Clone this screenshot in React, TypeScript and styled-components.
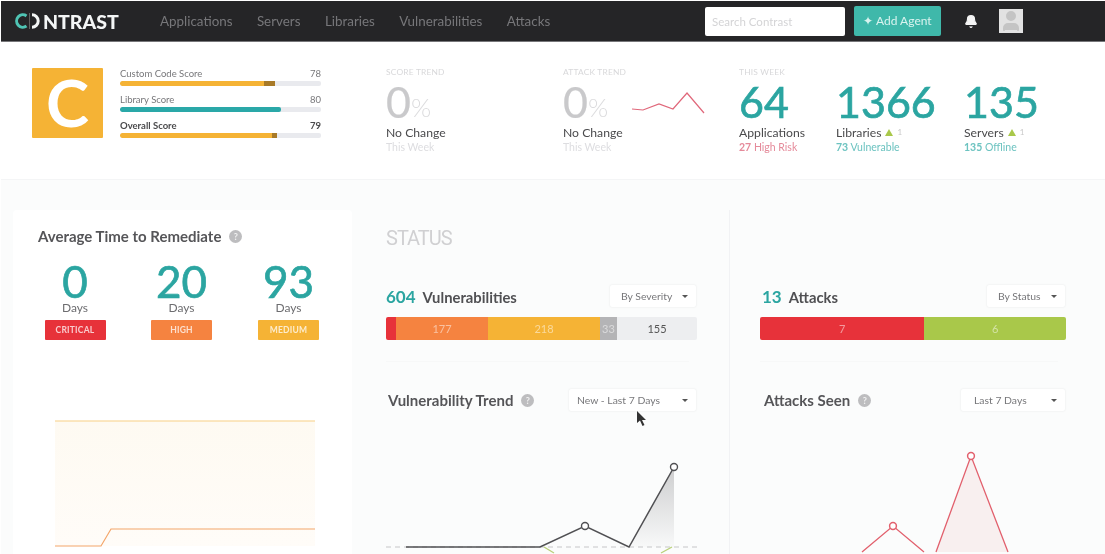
import React from "react";
import styled, { createGlobalStyle } from "styled-components";
import { Bell, User } from "lucide-react";

const Global = createGlobalStyle`
  html, body { margin: 0; padding: 0; background: #fff; }
  * { box-sizing: border-box; }
`;

const Page = styled.div`
  width: 1105px;
  height: 554px;
  overflow: hidden;
  padding: 1px 0 0 1px;
  font-family: Lato, "Open Sans", sans-serif;
  color: #4a4a4c;
  filter: blur(0.7px);
`;

const Nav = styled.nav`
  height: 41px;
  background: #252527;
  border-bottom: 1px solid #77777a;
  display: flex;
  align-items: center;
  padding-left: 14px;
`;

const Logo = styled.div`
  width: 145px;
  display: flex;
  align-items: center;
  color: #f4f6f6;
  font-size: 19.5px;
  font-weight: 900;
`;

const NavLink = styled.span`
  font-size: 13.4px;
  color: #77777a;
  margin-right: 24.4px;
`;

const NavRight = styled.div`
  margin-left: auto;
  display: flex;
  align-items: center;
`;

const Search = styled.div`
  width: 140px;
  height: 29px;
  background: #fff;
  border-radius: 2px;
  color: #d4d4d6;
  font-size: 11.5px;
  line-height: 29px;
  padding-left: 7px;
`;

const AddAgent = styled.div`
  width: 87px;
  height: 30px;
  margin-left: 9px;
  background: #3fb8aa;
  border-radius: 2px;
  color: #d9f3ef;
  font-size: 12px;
  line-height: 30px;
  text-align: center;
`;

const BellWrap = styled.div`
  width: 14px;
  margin-left: 23px;
  display: flex;
`;

const Avatar = styled.div`
  width: 24px;
  height: 24px;
  margin: 0 74px 0 21px;
  background: #e2e2e2;
  display: flex;
  align-items: flex-end;
  justify-content: center;
  overflow: hidden;
  margin-right: 74px;
`;

const NavEnd = styled.div`
  width: 8px;
  flex: none;
`;

const Summary = styled.section`
  height: 137px;
  background: #fff;
  display: flex;
  padding-left: 31px;
`;

const Grade = styled.div`
  width: 71px;
  height: 70px;
  margin-top: 26px;
  background: #f5b335;
  border-radius: 1px;
  color: #fff;
  font-size: 65px;
  font-weight: 700;
  line-height: 68px;
  text-align: center;
`;

const Scores = styled.div`
  width: 201px;
  margin: 26px 65px 0 17px;
  display: flex;
  flex-direction: column;
  gap: 8px;
`;

const ScoreHead = styled.div<{ $bold?: boolean }>`
  display: flex;
  justify-content: space-between;
  font-size: 9.5px;
  line-height: 11px;
  font-weight: ${(p) => (p.$bold ? 700 : 400)};
  color: ${(p) => (p.$bold ? "#4a4a4c" : "#77777a")};
`;

const Track = styled.div`
  height: 5px;
  margin-top: 2px;
  background: #e9eaee;
  border-radius: 2px;
  overflow: hidden;
`;

const Fill = styled.div<{ $color: string }>`
  height: 100%;
  background: ${(p) => p.$color};
  border-radius: 2px;
  display: flex;
  justify-content: flex-end;
`;

const FillEnd = styled.div<{ $w: number }>`
  width: ${(p) => p.$w}px;
  height: 100%;
  background: #a87a28;
`;

const Metric = styled.div<{ $w: number }>`
  width: ${(p) => p.$w}px;
  flex: none;
  padding-top: 25px;
`;

const Eyebrow = styled.div`
  height: 10px;
  font-size: 8.4px;
  line-height: 10px;
  color: #d8d8da;
  letter-spacing: 0.2px;
`;

const BigRow = styled.div`
  display: flex;
  align-items: flex-start;
  height: 40px;
  margin-top: 5px;
`;

const Big = styled.span<{ $grey?: boolean }>`
  font-size: 43px;
  line-height: 40px;
  color: ${(p) => (p.$grey ? "#c9c9cb" : "#2ba5a1")};
  -webkit-text-stroke: ${(p) => (p.$grey ? "0.2px" : "0.7px")} ${(p) => (p.$grey ? "#c9c9cb" : "#2ba5a1")};
`;

const Percent = styled.span`
  font-size: 26px;
  font-weight: 300;
  line-height: 26px;
  margin-top: 12px;
  color: #dcdcde;
`;

const MetricName = styled.div`
  font-size: 12.2px;
  line-height: 15px;
  margin-top: 3px;
  color: #4a4a4c;
  display: flex;
  align-items: center;
  gap: 4px;
`;

const Delta = styled.span`
  font-size: 8px;
  color: #c8c8c8;
`;

const Triangle = styled.span`
  width: 0;
  height: 0;
  border-left: 4px solid transparent;
  border-right: 4px solid transparent;
  border-bottom: 7px solid #a9c84a;
`;

const MetricSub = styled.div<{ $color: string }>`
  font-size: 10.5px;
  line-height: 15px;
  color: ${(p) => p.$color};
  b { font-weight: 700; }
`;

const Spark = styled.svg`
  width: 75px;
  height: 24px;
  margin: 9px 0 0 23px;
  flex: none;
`;

const Lower = styled.section`
  height: 375px;
  background: #fbfcfc;
  border-top: 1px solid #f4f5f6;
  display: grid;
  grid-template-columns: 716px 1fr;
  padding: 30px 0 0 12px;
`;

const Left = styled.div`
  display: grid;
  grid-template-columns: 339px 1fr;
`;

const Card = styled.div`
  height: 344px;
  background: #fff;
  border-radius: 4px 4px 0 0;
  padding-top: 17px;
`;

const Title = styled.div`
  display: flex;
  align-items: center;
  gap: 8px;
  font-size: 15px;
  line-height: 18px;
  font-weight: 700;
  color: #555558;
`;

const CardTitle = styled(Title)`
  padding-left: 25px;
`;

const Help = styled.span`
  width: 13px;
  height: 13px;
  border-radius: 50%;
  background: #bdbdbf;
  color: #f1f1f1;
  font-size: 9px;
  font-weight: 700;
  line-height: 13px;
  text-align: center;
`;

const Stats = styled.div`
  display: grid;
  grid-template-columns: 106px 107px 107px;
  margin: 16px 0 0 9px;
`;

const Stat = styled.div`
  display: flex;
  flex-direction: column;
  align-items: center;
`;

const StatNum = styled.div`
  font-size: 44px;
  line-height: 40px;
  color: #2ba5a1;
  -webkit-text-stroke: 0.7px #2ba5a1;
`;

const Days = styled.div`
  font-size: 12px;
  line-height: 14px;
  color: #6d6d70;
`;

const Badge = styled.div<{ $color: string }>`
  width: 61px;
  height: 20px;
  margin-top: 5px;
  background: ${(p) => p.$color};
  border-radius: 1px;
  color: rgba(255, 255, 255, 0.75);
  font-size: 8.5px;
  font-weight: 700;
  line-height: 20px;
  text-align: center;
  letter-spacing: 0.2px;
`;

const AreaChart = styled.svg`
  display: block;
  width: 339px;
  height: 200px;
  margin-top: 18px;
`;

const Column = styled.div<{ $pad: number; $w: number }>`
  padding-left: ${(p) => p.$pad}px;
  width: ${(p) => p.$w + p.$pad}px;
`;

const RightColumn = styled(Column)`
  border-left: 1px solid #f1f2f4;
`;

const Status = styled.div`
  height: 75px;
  padding-top: 16px;
  font-family: Roboto, sans-serif;
  font-size: 20px;
  line-height: 24px;
  letter-spacing: -1px;
  color: #d0d0d2;
`;

const RowHead = styled.div`
  height: 22px;
  display: flex;
  align-items: center;
  justify-content: space-between;
`;

const Count = styled.div<{ $inset?: number }>`
  margin-left: ${(p) => p.$inset ?? 0}px;
  font-size: 14.8px;
  font-weight: 700;
  color: #505053;
  b { color: #2ba5a1; font-size: 17px; font-weight: 700; margin-right: 7px; }
`;

const Select = styled.div<{ $w: number }>`
  width: ${(p) => p.$w}px;
  height: 22px;
  background: #fff;
  border-radius: 2px;
  box-shadow: 0 0 2px rgba(0, 0, 0, 0.1);
  display: flex;
  align-items: center;
  justify-content: space-between;
  padding: 0 8px;
  font-size: 10.4px;
  color: #77777a;
  margin-right: 1px;
`;

const SelectLabel = styled.span<{ $inset: number }>`
  margin-left: ${(p) => p.$inset}px;
`;

const Caret = styled.span`
  width: 0;
  height: 0;
  border-left: 3.5px solid transparent;
  border-right: 3.5px solid transparent;
  border-top: 3.5px solid #555;
`;

const Bar = styled.div`
  height: 23px;
  margin-top: 10px;
  display: flex;
  border-radius: 2px;
  overflow: hidden;
`;

const Seg = styled.div<{ $color: string; $w: number; $dark?: boolean }>`
  width: ${(p) => p.$w}px;
  background: ${(p) => p.$color};
  color: ${(p) => (p.$dark ? "#555" : "rgba(255,255,255,.5)")};
  font-size: 11px;
  line-height: 23px;
  text-align: center;
  overflow: hidden;
`;

const Rule = styled.div`
  height: 1px;
  margin: 21px 8px 0 0;
  background: #f7f8f8;
`;

const TrendHead = styled(RowHead)<{ $inset: number }>`
  margin-top: 27px;
  padding-left: ${(p) => p.$inset}px;
  position: relative;
`;

const Chart = styled.svg`
  display: block;
  margin-top: 29px;
  overflow: visible;
`;

const Cursor = styled.svg`
  position: absolute;
  left: 250px;
  top: 22px;
  width: 11px;
  height: 16px;
`;

const bars = [
  { name: "Custom Code Score", val: 78, pct: 77, color: "#f5b335", end: 11 },
  { name: "Library Score", val: 80, pct: 80, color: "#2aa8a8", end: 0 },
  { name: "Overall Score", val: 79, pct: 78, color: "#f5b335", end: 5, bold: true },
];

const stats = [
  { n: "0", label: "CRITICAL", color: "#e7323a" },
  { n: "20", label: "HIGH", color: "#f58340" },
  { n: "93", label: "MEDIUM", color: "#f5b335" },
];

export default function App() {
  return (
    <Page>
      <Global />
      <Nav>
        <Logo>
          <svg width="28" height="20" viewBox="0 0 28 20">
            <path d="M11.5 5 A6.2 6.2 0 1 0 11.5 15" fill="none" stroke="#4fc4b4" strokeWidth="3" />
            <path d="M17 3.8 A6.2 6.2 0 0 1 17 16.2" fill="none" stroke="#f4f6f6" strokeWidth="3" />
            <path d="M14.5 2 V18" stroke="#8a8a8a" strokeWidth="0.6" />
          </svg>
          NTRAST
        </Logo>
        <NavLink>Applications</NavLink>
        <NavLink>Servers</NavLink>
        <NavLink>Libraries</NavLink>
        <NavLink>Vulnerabilities</NavLink>
        <NavLink>Attacks</NavLink>
        <NavRight>
          <Search>Search Contrast</Search>
          <AddAgent>✦ Add Agent</AddAgent>
          <BellWrap>
            <Bell size={15} color="#f5f5f5" fill="#f5f5f5" />
          </BellWrap>
          <Avatar>
            <User size={24} color="#c4c4c4" fill="#c4c4c4" />
          </Avatar>
          <NavEnd />
        </NavRight>
      </Nav>

      <Summary>
        <Grade>C</Grade>
        <Scores>
          {bars.map((b) => (
            <div key={b.name}>
              <ScoreHead $bold={b.bold}>
                <span>{b.name}</span>
                <span>{b.val}</span>
              </ScoreHead>
              <Track>
                <Fill $color={b.color} style={{ width: `${b.pct}%` }}>
                  {b.end > 0 && <FillEnd $w={b.end} />}
                </Fill>
              </Track>
            </div>
          ))}
        </Scores>
        <Metric $w={177}>
          <Eyebrow>SCORE TREND</Eyebrow>
          <BigRow>
            <Big $grey>0</Big>
            <Percent>%</Percent>
          </BigRow>
          <MetricName>No Change</MetricName>
          <MetricSub $color="#dddde0">This Week</MetricSub>
        </Metric>
        <Metric $w={176}>
          <Eyebrow>ATTACK TREND</Eyebrow>
          <BigRow>
            <Big $grey>0</Big>
            <Percent>%</Percent>
            <Spark viewBox="0 0 75 24">
              <path d="M1 18 L12 19 L28 13 L42 18 L56 2 L73 22" fill="none" stroke="#e0677a" strokeWidth="1.2" />
            </Spark>
          </BigRow>
          <MetricName>No Change</MetricName>
          <MetricSub $color="#dddde0">This Week</MetricSub>
        </Metric>
        <Metric $w={97}>
          <Eyebrow>THIS WEEK</Eyebrow>
          <BigRow>
            <Big>64</Big>
          </BigRow>
          <MetricName>Applications</MetricName>
          <MetricSub $color="#e58a9a">
            <b>27</b> High Risk
          </MetricSub>
        </Metric>
        <Metric $w={128}>
          <Eyebrow />
          <BigRow>
            <Big>1366</Big>
          </BigRow>
          <MetricName>
            Libraries <Triangle /> <Delta>1</Delta>
          </MetricName>
          <MetricSub $color="#6cc3c0">
            <b>73</b> Vulnerable
          </MetricSub>
        </Metric>
        <Metric $w={100}>
          <Eyebrow />
          <BigRow>
            <Big>135</Big>
          </BigRow>
          <MetricName>
            Servers <Triangle /> <Delta>1</Delta>
          </MetricName>
          <MetricSub $color="#6cc3c0">
            <b>135</b> Offline
          </MetricSub>
        </Metric>
      </Summary>

      <Lower>
        <Left>
          <Card>
            <CardTitle>
              Average Time to Remediate <Help>?</Help>
            </CardTitle>
            <Stats>
              {stats.map((s) => (
                <Stat key={s.label}>
                  <StatNum>{s.n}</StatNum>
                  <Days>Days</Days>
                  <Badge $color={s.color}>{s.label}</Badge>
                </Stat>
              ))}
            </Stats>
            <AreaChart viewBox="0 0 339 200">
              <defs>
                <linearGradient id="rem" x1="0" y1="0" x2="0" y2="1">
                  <stop offset="0" stopColor="#fefaf2" />
                  <stop offset="1" stopColor="#fffcf8" />
                </linearGradient>
              </defs>
              <rect x="42" y="63" width="260" height="125" fill="url(#rem)" />
              <path d="M42 63 H302" stroke="#f8cf85" strokeWidth="1.2" fill="none" />
              <path d="M42 188 H88 L98 171 H302" stroke="#f4a66a" strokeWidth="1.2" fill="none" />
            </AreaChart>
          </Card>
          <Column $pad={34} $w={311}>
            <Status>STATUS</Status>
            <RowHead>
              <Count>
                <b>604</b>Vulnerabilities
              </Count>
              <Select $w={86}>
                <SelectLabel $inset={3}>By Severity</SelectLabel>
                <Caret />
              </Select>
            </RowHead>
            <Bar>
              <Seg $color="#e7323a" $w={10} />
              <Seg $color="#f58340" $w={92}>177</Seg>
              <Seg $color="#f5b335" $w={112}>218</Seg>
              <Seg $color="#b4b4b6" $w={17}>33</Seg>
              <Seg $color="#edeef0" $w={80} $dark>155</Seg>
            </Bar>
            <Rule />
            <TrendHead $inset={2}>
              <Title>
                Vulnerability Trend <Help>?</Help>
              </Title>
              <Select $w={127}>
                <SelectLabel $inset={0}>New - Last 7 Days</SelectLabel>
                <Caret />
              </Select>
              <Cursor viewBox="0 0 11 16">
                <path d="M1 0 V12 L4 9.5 L6.5 15 L8.5 14 L6 9 H10 Z" fill="#333" />
              </Cursor>
            </TrendHead>
            <Chart width="311" height="114" viewBox="0 0 311 114">
              <defs>
                <linearGradient id="vt" x1="0" y1="0" x2="0" y2="1">
                  <stop offset="0" stopColor="#a8a8aa" stopOpacity="0.55" />
                  <stop offset="1" stopColor="#a8a8aa" stopOpacity="0.04" />
                </linearGradient>
              </defs>
              <path d="M243 107 L288 27 V107 Z" fill="url(#vt)" />
              <path d="M0 107 H311" stroke="#c6c6c8" strokeWidth="1" strokeDasharray="5 4" />
              <path d="M158 107 L168 113 M275 113 L286 107" stroke="#b9d17a" strokeWidth="1.4" fill="none" />
              <path d="M20 107 H154 L199 86 L243 107 L288 27" fill="none" stroke="#505053" strokeWidth="1.5" />
              <circle cx="199" cy="86" r="3.5" fill="#fff" stroke="#505053" strokeWidth="1.4" />
              <circle cx="288" cy="27" r="3.5" fill="#fff" stroke="#505053" strokeWidth="1.4" />
            </Chart>
          </Column>
        </Left>
        <RightColumn $pad={30} $w={307}>
          <Status />
          <RowHead>
            <Count $inset={2}>
              <b>13</b>Attacks
            </Count>
            <Select $w={78}>
              <SelectLabel $inset={3}>By Status</SelectLabel>
              <Caret />
            </Select>
          </RowHead>
          <Bar>
            <Seg $color="#e7323a" $w={165}>7</Seg>
            <Seg $color="#a9c84a" $w={142}>6</Seg>
          </Bar>
          <Rule />
          <TrendHead $inset={4}>
            <Title>
              Attacks Seen <Help>?</Help>
            </Title>
            <Select $w={104}>
              <SelectLabel $inset={5}>Last 7 Days</SelectLabel>
              <Caret />
            </Select>
          </TrendHead>
          <Chart width="307" height="114" viewBox="0 0 307 114">
            <path d="M176 112 L211 16 L248 112 Z" fill="#f6e9ea" opacity="0.7" />
            <path d="M102 112 L133 86 L164 112" fill="none" stroke="#e2606d" strokeWidth="1.3" />
            <path d="M176 112 L211 16 L248 112" fill="none" stroke="#e2606d" strokeWidth="1.3" />
            <circle cx="133" cy="86" r="3.4" fill="#fff" stroke="#e2606d" strokeWidth="1.5" />
            <circle cx="211" cy="16" r="3.4" fill="#fff" stroke="#e2606d" strokeWidth="1.5" />
          </Chart>
        </RightColumn>
      </Lower>
    </Page>
  );
}
